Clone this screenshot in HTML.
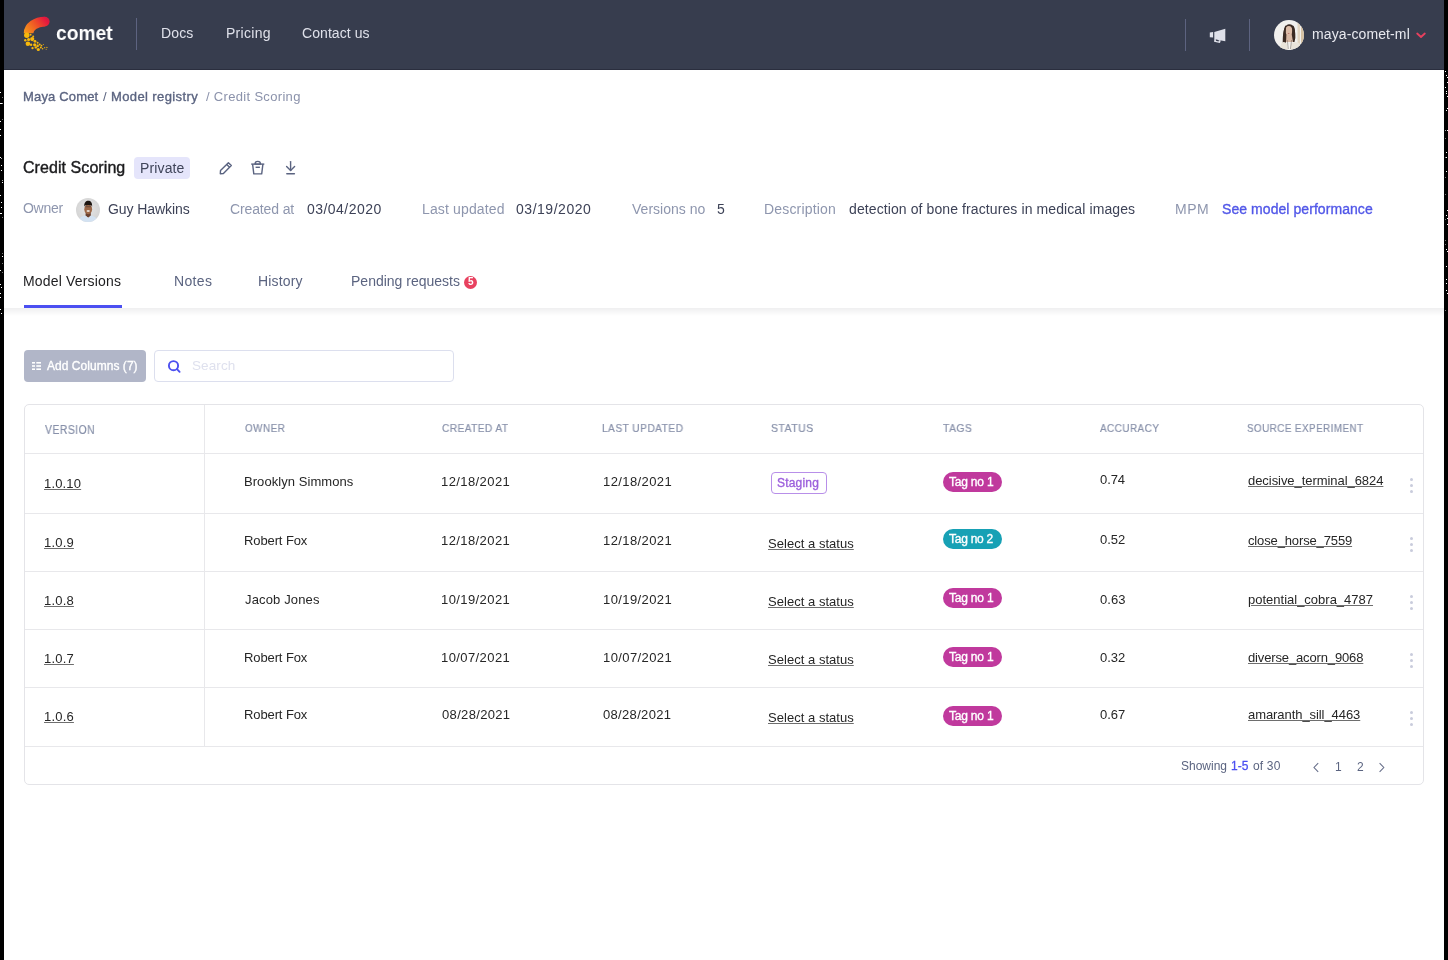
<!DOCTYPE html>
<html><head><meta charset="utf-8"><title>Credit Scoring - Model registry</title>
<style>
html,body{margin:0;padding:0;background:#fff;}
body{width:1448px;height:960px;position:relative;overflow:hidden;font-family:"Liberation Sans",sans-serif;}
.abs{position:absolute;box-sizing:content-box;}
.t{position:absolute;line-height:1;white-space:nowrap;will-change:transform;}
#nav{position:absolute;left:0;top:0;width:1448px;height:69px;background:#373d4e;border-bottom:1px solid #2a2e3e;}
</style></head><body>
<div id="nav"></div><svg class="abs" style="left:16px;top:10px" width="40" height="45" viewBox="0 0 40 45">
<defs><linearGradient id="lg" gradientUnits="userSpaceOnUse" x1="10" y1="26" x2="34" y2="8">
<stop offset="0" stop-color="#f6a01a"/><stop offset="0.5" stop-color="#ee5326"/><stop offset="0.85" stop-color="#e5173f"/><stop offset="1" stop-color="#c4223f"/></linearGradient></defs>
<path d="M12.6 23.2 A16.2 11.6 0 0 1 28.8 11.6" stroke="url(#lg)" stroke-width="9.6" fill="none" stroke-linecap="butt"/><circle cx="28.8" cy="11.6" r="4.8" fill="url(#lg)"/>
<g fill="#f7b80c">
<circle cx="10.8" cy="25.3" r="2.7"/><circle cx="14.6" cy="24.8" r="1"/><circle cx="17.2" cy="26.4" r="1"/>
<circle cx="9.3" cy="30.2" r="1.2"/><circle cx="12.6" cy="29.5" r="1.6"/><circle cx="16.2" cy="29.1" r="2.1"/>
<circle cx="19" cy="31.3" r="1.4"/><circle cx="21.6" cy="32.7" r="1"/>
<circle cx="11.9" cy="33.8" r="2.3"/><circle cx="15.1" cy="34.8" r="1.2"/><circle cx="18.7" cy="34.8" r="1.6"/><circle cx="21.6" cy="35.9" r="1.3"/><circle cx="23.7" cy="34.5" r="1"/><circle cx="25.5" cy="35.6" r="0.9"/><circle cx="27.3" cy="34.5" r="0.5"/>
<circle cx="16.5" cy="38.1" r="1.2"/><circle cx="19.8" cy="37.4" r="1.2"/><circle cx="22.3" cy="39.5" r="1.6"/><circle cx="24.8" cy="37.4" r="1"/><circle cx="26.6" cy="38.8" r="0.8"/><circle cx="28.7" cy="37.7" r="0.6"/><circle cx="30.9" cy="37.4" r="0.6"/><circle cx="30.2" cy="39.2" r="0.5"/>
</g></svg><div class="t " style="left:55.99px;top:21.72px;font-size:21px;color:#ffffff;font-weight:700;letter-spacing:-1.305px;letter-spacing:0;transform:scaleX(0.915);transform-origin:0 0;">comet</div>
<div class="abs" style="left:136px;top:18px;width:1px;height:32px;background:#5d6380"></div><div class="t " style="left:160.72px;top:26.45px;font-size:14px;color:#dfe1ea;font-weight:400;letter-spacing:0.124px;">Docs</div>
<div class="t " style="left:225.72px;top:26.45px;font-size:14px;color:#dfe1ea;font-weight:400;letter-spacing:0.283px;">Pricing</div>
<div class="t " style="left:302.45px;top:26.45px;font-size:14px;color:#dfe1ea;font-weight:400;letter-spacing:0.075px;">Contact us</div>
<div class="abs" style="left:1185px;top:19px;width:1px;height:32px;background:#5d6380"></div><div class="abs" style="left:1249px;top:19px;width:1px;height:32px;background:#5d6380"></div><svg class="abs" style="left:1209px;top:28px" width="18" height="16" viewBox="0 0 18 16">
<path d="M0.8 4.5 L4.1 4.1 L4.1 9.6 L0.8 9.2 Z" fill="#dfe1ea"/>
<path d="M5.3 4.1 L16.3 0.8 L16.3 13.2 L5.3 11.2 Z" fill="#dfe1ea"/>
<path d="M5.4 10.9 L11.9 12.4 L10.9 14.9 L5 13.7 Z" fill="#dfe1ea"/>
<path d="M7.1 11.6 L10 12.3 L9.5 13.4 L6.8 12.8 Z" fill="#373d4e"/>
</svg><svg class="abs" style="left:1274px;top:20px" width="30" height="30" viewBox="0 0 30 30">
<defs><clipPath id="ca"><circle cx="15" cy="15" r="15"/></clipPath></defs>
<g clip-path="url(#ca)">
<rect width="30" height="30" fill="#f1f0ed"/><rect x="23.5" y="0" width="2.5" height="30" fill="#e2d5c1"/><rect x="27" y="0" width="3" height="30" fill="#d6c2a4"/>
<path d="M9 29 C8.5 18 8.5 5 15 4.2 C20.5 4 21.5 10 21.3 18 L20.5 22 L12 22 Z" fill="#3b2b23"/>
<path d="M12.5 13 L17.5 13 L19 22 L12 22 Z" fill="#d8b8a3"/>
<ellipse cx="14.8" cy="10.6" rx="3.4" ry="4.6" fill="#dcbca7"/>
<path d="M9.3 24 C9.3 12 10 6 12.2 5.2 L11.6 14 L12 24 Z" fill="#3b2b23"/>
<path d="M19 5.5 C21 7 21.3 12 21 20 L18.6 16 L18.4 8 Z" fill="#3b2b23"/>
<ellipse cx="14.7" cy="13.5" rx="1" ry="0.45" fill="#b86a62"/>
<path d="M5 30 L7.5 23 C9.5 21.3 11.5 21.8 13.2 24.5 L14.5 30 Z" fill="#e9e4da"/>
<path d="M15.5 30 L17 24 C19 21.5 23 21.8 25.5 23.5 L28 30 Z" fill="#e9e4da"/>
<path d="M13.2 24.5 L17 24 L16.6 30 L13.8 30 Z" fill="#f7f5f1"/>
<path d="M13.3 20 L14.3 29 M17.6 20 L16.4 29" stroke="#6b625c" stroke-width="0.5" fill="none"/>
</g></svg><div class="t " style="left:1312.30px;top:27.45px;font-size:14px;color:#e8e9ef;font-weight:400;letter-spacing:0.107px;">maya-comet-ml</div>
<svg class="abs" style="left:1416px;top:32px" width="10" height="7" viewBox="0 0 10 7"><path d="M1.2 1.5 L5 5 L8.8 1.5" stroke="#e8405e" stroke-width="1.8" fill="none" stroke-linecap="round" stroke-linejoin="round"/></svg><div class="t " style="left:23.18px;top:89.99px;font-size:13px;color:#5b6480;font-weight:400;letter-spacing:0.165px;-webkit-text-stroke:0.35px currentColor;">Maya Comet</div>
<div class="t " style="left:103.00px;top:89.99px;font-size:13px;color:#5b6480;font-weight:400;">/</div>
<div class="t " style="left:111.36px;top:89.99px;font-size:13px;color:#5b6480;font-weight:400;letter-spacing:0.390px;-webkit-text-stroke:0.35px currentColor;">Model registry</div>
<div class="t " style="left:206.14px;top:89.99px;font-size:13px;color:#8b92ab;font-weight:400;letter-spacing:0.319px;">/ Credit Scoring</div>
<div class="t " style="left:23.46px;top:160.05px;font-size:16px;color:#1c1c1e;font-weight:400;letter-spacing:0.067px;-webkit-text-stroke:0.4px currentColor;">Credit Scoring</div>
<div class="abs" style="left:134px;top:157px;width:56px;height:22px;background:#e5e5fb;border-radius:4px"></div><div class="t " style="left:139.80px;top:161.15px;font-size:14px;color:#3f4459;font-weight:400;letter-spacing:0.129px;">Private</div>
<svg class="abs" style="left:219px;top:161px" width="14" height="14" viewBox="0 0 14 14" fill="none" stroke="#5a6380" stroke-width="1.4" stroke-linejoin="round">
<path d="M1.3 12.7 L1.5 9.6 L9.4 1.7 L12.3 4.6 L4.4 12.5 Z"/><path d="M7.7 3.4 L10.6 6.3"/></svg><svg class="abs" style="left:250px;top:160px" width="16" height="16" viewBox="0 0 16 16" fill="none" stroke="#5a6380" stroke-width="1.4" stroke-linejoin="round">
<path d="M1.2 4.1 H14.3"/><path d="M2.6 4.1 L3.8 13.9 H11.7 L12.9 4.1"/><path d="M5 4.1 A2.75 2.75 0 0 1 10.5 4.1 Z"/><path d="M5.6 7.3 H9.9"/></svg><svg class="abs" style="left:284px;top:160px" width="13" height="16" viewBox="0 0 13 16" fill="none" stroke="#5a6380" stroke-width="1.4" stroke-linecap="round" stroke-linejoin="round">
<path d="M6.6 1.6 V10.4"/><path d="M2.6 6.4 L6.6 10.4 L10.6 6.4"/><path d="M2.8 13.7 H10.4"/></svg><div class="t " style="left:23.05px;top:201.15px;font-size:14px;color:#8e96ae;font-weight:400;letter-spacing:-0.278px;">Owner</div>
<svg class="abs" style="left:76px;top:198px" width="24" height="24" viewBox="0 0 24 24">
<defs><clipPath id="cb"><circle cx="12" cy="12" r="12"/></clipPath><radialGradient id="gb" cx="0.5" cy="0.45" r="0.6"><stop offset="0" stop-color="#e6e6e6"/><stop offset="1" stop-color="#d2d2d2"/></radialGradient></defs>
<g clip-path="url(#cb)"><rect width="24" height="24" fill="url(#gb)"/>
<path d="M9.8 14 L14.6 14 L15 18 L12.2 19.5 L9.4 18 Z" fill="#6a4231"/>
<path d="M2 24 C3 19.5 6.5 17.8 9.8 17.6 L12.2 20.2 L14.6 17.6 C17.5 17.8 21 19.5 22 24 Z" fill="#d3e2f2"/>
<ellipse cx="12.2" cy="11.2" rx="3.9" ry="5" fill="#9c6848"/>
<path d="M8.2 8.8 C8 4.5 10 2.8 12.2 2.8 C14.8 2.8 16.4 4.5 16.1 8.8 L15.6 7.6 C14 6.8 10.4 6.8 8.8 7.6 Z" fill="#1d1510"/>
<rect x="9.4" y="8.3" width="5.7" height="0.9" fill="#4b3b3b" opacity="0.7"/>
<ellipse cx="12.2" cy="13" rx="1.7" ry="1" fill="#e6dcd4"/>
</g></svg><div class="t " style="left:107.65px;top:202.15px;font-size:14px;color:#3d4257;font-weight:400;letter-spacing:-0.078px;">Guy Hawkins</div>
<div class="t " style="left:230.45px;top:201.65px;font-size:14px;color:#8e96ae;font-weight:400;letter-spacing:-0.129px;">Created at</div>
<div class="t " style="left:306.99px;top:201.65px;font-size:14px;color:#3d4257;font-weight:400;letter-spacing:0.464px;">03/04/2020</div>
<div class="t " style="left:421.66px;top:201.65px;font-size:14px;color:#8e96ae;font-weight:400;letter-spacing:0.136px;">Last updated</div>
<div class="t " style="left:515.65px;top:201.65px;font-size:14px;color:#3d4257;font-weight:400;letter-spacing:0.527px;">03/19/2020</div>
<div class="t " style="left:631.55px;top:201.65px;font-size:14px;color:#8e96ae;font-weight:400;letter-spacing:0.022px;">Versions no</div>
<div class="t " style="left:716.71px;top:201.65px;font-size:14px;color:#3d4257;font-weight:400;">5</div>
<div class="t " style="left:764.04px;top:201.65px;font-size:14px;color:#8e96ae;font-weight:400;letter-spacing:0.180px;">Description</div>
<div class="t " style="left:849.34px;top:201.65px;font-size:14px;color:#3d4257;font-weight:400;letter-spacing:0.099px;">detection of bone fractures in medical images</div>
<div class="t " style="left:1175.16px;top:201.65px;font-size:14px;color:#8e96ae;font-weight:400;letter-spacing:0.559px;">MPM</div>
<div class="t " style="left:1221.79px;top:201.65px;font-size:14px;color:#5157e8;font-weight:400;letter-spacing:0.064px;-webkit-text-stroke:0.35px currentColor;">See model performance</div>
<div class="t " style="left:23.15px;top:273.95px;font-size:14px;color:#1d1d1f;font-weight:400;letter-spacing:0.171px;">Model Versions</div>
<div class="t " style="left:173.80px;top:273.95px;font-size:14px;color:#5b6480;font-weight:400;letter-spacing:0.345px;">Notes</div>
<div class="t " style="left:258.38px;top:273.95px;font-size:14px;color:#5b6480;font-weight:400;letter-spacing:0.157px;">History</div>
<div class="t " style="left:351.44px;top:273.95px;font-size:14px;color:#5b6480;font-weight:400;letter-spacing:0.003px;">Pending requests</div>
<div class="abs" style="left:464px;top:276px;width:13px;height:13px;border-radius:50%;background:#e8415f"></div><div class="t " style="left:467.60px;top:277.33px;font-size:10px;color:#ffffff;font-weight:700;">5</div>
<div class="abs" style="left:24px;top:305px;width:98px;height:3px;background:#4b4ff1"></div><div class="abs" style="left:4px;top:308px;width:1440px;height:8px;background:linear-gradient(#efeff0,#ffffff)"></div><div class="abs" style="left:24px;top:350px;width:122px;height:32px;background:#b1b6c8;border-radius:4px"></div><svg class="abs" style="left:32px;top:362px" width="9" height="8" viewBox="0 0 9 8" fill="#ffffff">
<rect x="0" y="0" width="3" height="1.6"/><rect x="4.3" y="0" width="4.7" height="1.6"/>
<rect x="0" y="3.2" width="3" height="1.6"/><rect x="4.3" y="3.2" width="4.7" height="1.6"/>
<rect x="0" y="6.4" width="3" height="1.6"/><rect x="4.3" y="6.4" width="4.7" height="1.6"/></svg><div class="t " style="left:47.12px;top:359.84px;font-size:12px;color:#ffffff;font-weight:400;letter-spacing:0.040px;-webkit-text-stroke:0.35px currentColor;">Add Columns (7)</div>
<div class="abs" style="left:154px;top:350px;width:298px;height:30px;border:1px solid #dcdfee;border-radius:4px"></div><svg class="abs" style="left:166px;top:358px" width="16" height="16" viewBox="0 0 16 16" fill="none" stroke="#4c50f0" stroke-width="1.9" stroke-linecap="round">
<circle cx="7.5" cy="7.7" r="4.6"/><path d="M11 11.2 L13.6 13.8"/></svg><div class="t " style="left:192.06px;top:359.37px;font-size:13.5px;color:#dfe1ee;font-weight:400;letter-spacing:0.111px;">Search</div>
<div class="abs" style="left:24px;top:404px;width:1398px;height:379px;border:1px solid #e4e4e8;border-radius:5px"></div><div class="abs" style="left:25px;top:453px;width:1398px;height:1px;background:#e8e8eb"></div><div class="abs" style="left:204px;top:405px;width:1px;height:341px;background:#e8e8eb"></div><div class="abs" style="left:25px;top:513px;width:1398px;height:1px;background:#e8e8eb"></div><div class="abs" style="left:25px;top:571px;width:1398px;height:1px;background:#e8e8eb"></div><div class="abs" style="left:25px;top:629px;width:1398px;height:1px;background:#e8e8eb"></div><div class="abs" style="left:25px;top:687px;width:1398px;height:1px;background:#e8e8eb"></div><div class="abs" style="left:25px;top:746px;width:1398px;height:1px;background:#e8e8eb"></div><div class="t " style="left:44.59px;top:423.84px;font-size:12px;color:#8891aa;font-weight:400;transform:scaleX(0.8709);transform-origin:0 0;-webkit-text-stroke:0.2px currentColor;letter-spacing:0.5px;">VERSION</div>
<div class="t " style="left:245.08px;top:422.99px;font-size:11px;color:#8891aa;font-weight:400;transform:scaleX(0.9003);transform-origin:0 0;-webkit-text-stroke:0.2px currentColor;letter-spacing:0.5px;">OWNER</div>
<div class="t " style="left:441.85px;top:422.99px;font-size:11px;color:#8891aa;font-weight:400;transform:scaleX(0.9171);transform-origin:0 0;-webkit-text-stroke:0.2px currentColor;letter-spacing:0.5px;">CREATED AT</div>
<div class="t " style="left:602.39px;top:422.99px;font-size:11px;color:#8891aa;font-weight:400;transform:scaleX(0.9240);transform-origin:0 0;-webkit-text-stroke:0.2px currentColor;letter-spacing:0.5px;">LAST UPDATED</div>
<div class="t " style="left:771.28px;top:422.99px;font-size:11px;color:#8891aa;font-weight:400;transform:scaleX(0.9522);transform-origin:0 0;-webkit-text-stroke:0.2px currentColor;letter-spacing:0.5px;">STATUS</div>
<div class="t " style="left:942.90px;top:422.99px;font-size:11px;color:#8891aa;font-weight:400;transform:scaleX(0.9410);transform-origin:0 0;-webkit-text-stroke:0.2px currentColor;letter-spacing:0.5px;">TAGS</div>
<div class="t " style="left:1100.44px;top:422.99px;font-size:11px;color:#8891aa;font-weight:400;transform:scaleX(0.9027);transform-origin:0 0;-webkit-text-stroke:0.2px currentColor;letter-spacing:0.5px;">ACCURACY</div>
<div class="t " style="left:1247.49px;top:422.99px;font-size:11px;color:#8891aa;font-weight:400;transform:scaleX(0.8947);transform-origin:0 0;-webkit-text-stroke:0.2px currentColor;letter-spacing:0.5px;">SOURCE EXPERIMENT</div>
<div class="t " style="left:44.39px;top:476.99px;font-size:13px;color:#262626;font-weight:400;letter-spacing:0.166px;text-decoration:underline;text-underline-offset:1px;text-decoration-color:#6e6e6e">1.0.10</div>
<div class="t " style="left:244.42px;top:474.99px;font-size:13px;color:#262626;font-weight:400;letter-spacing:0.062px;">Brooklyn Simmons</div>
<div class="t " style="left:441.48px;top:474.99px;font-size:13px;color:#262626;font-weight:400;letter-spacing:0.413px;">12/18/2021</div>
<div class="t " style="left:602.80px;top:474.99px;font-size:13px;color:#262626;font-weight:400;letter-spacing:0.398px;">12/18/2021</div>
<div class="abs" style="left:771px;top:472px;width:54px;height:20px;border:1px solid #b88fe9;border-radius:4px"></div><div class="t " style="left:777.41px;top:476.84px;font-size:12px;color:#9c5fdc;font-weight:400;letter-spacing:0.187px;-webkit-text-stroke:0.35px currentColor;">Staging</div>
<div class="abs" style="left:943px;top:472px;width:59px;height:20px;border-radius:10px;background:#c0399d"></div><div class="t " style="left:949.30px;top:475.84px;font-size:12px;color:#ffffff;font-weight:400;letter-spacing:-0.204px;-webkit-text-stroke:0.35px currentColor;">Tag no 1</div>
<div class="t " style="left:1099.69px;top:473.29px;font-size:13px;color:#262626;font-weight:400;letter-spacing:-0.084px;">0.74</div>
<div class="t " style="left:1248.11px;top:474.29px;font-size:13px;color:#262626;font-weight:400;letter-spacing:-0.055px;text-decoration:underline;text-underline-offset:1px;text-decoration-color:#6e6e6e">decisive_terminal_6824</div>
<div class="abs" style="left:1410px;top:478.0px;width:3px;height:3px;border-radius:50%;background:#c9ccdc"></div><div class="abs" style="left:1410px;top:484.0px;width:3px;height:3px;border-radius:50%;background:#c9ccdc"></div><div class="abs" style="left:1410px;top:490.0px;width:3px;height:3px;border-radius:50%;background:#c9ccdc"></div><div class="t " style="left:44.39px;top:535.99px;font-size:13px;color:#262626;font-weight:400;letter-spacing:0.196px;text-decoration:underline;text-underline-offset:1px;text-decoration-color:#6e6e6e">1.0.9</div>
<div class="t " style="left:244.42px;top:534.19px;font-size:13px;color:#262626;font-weight:400;letter-spacing:-0.107px;">Robert Fox</div>
<div class="t " style="left:441.48px;top:534.19px;font-size:13px;color:#262626;font-weight:400;letter-spacing:0.413px;">12/18/2021</div>
<div class="t " style="left:602.80px;top:534.19px;font-size:13px;color:#262626;font-weight:400;letter-spacing:0.398px;">12/18/2021</div>
<div class="t " style="left:768.49px;top:536.99px;font-size:13px;color:#262626;font-weight:400;letter-spacing:0.033px;text-decoration:underline;text-underline-offset:1px;text-decoration-color:#6e6e6e">Select a status</div>
<div class="abs" style="left:943px;top:529px;width:59px;height:20px;border-radius:10px;background:#17a1b5"></div><div class="t " style="left:949.30px;top:532.84px;font-size:12px;color:#ffffff;font-weight:400;letter-spacing:-0.255px;-webkit-text-stroke:0.35px currentColor;">Tag no 2</div>
<div class="t " style="left:1099.69px;top:533.29px;font-size:13px;color:#262626;font-weight:400;letter-spacing:0.003px;">0.52</div>
<div class="t " style="left:1248.11px;top:534.09px;font-size:13px;color:#262626;font-weight:400;letter-spacing:-0.135px;text-decoration:underline;text-underline-offset:1px;text-decoration-color:#6e6e6e">close_horse_7559</div>
<div class="abs" style="left:1410px;top:537.0px;width:3px;height:3px;border-radius:50%;background:#c9ccdc"></div><div class="abs" style="left:1410px;top:543.0px;width:3px;height:3px;border-radius:50%;background:#c9ccdc"></div><div class="abs" style="left:1410px;top:549.0px;width:3px;height:3px;border-radius:50%;background:#c9ccdc"></div><div class="t " style="left:44.39px;top:594.49px;font-size:13px;color:#262626;font-weight:400;letter-spacing:0.196px;text-decoration:underline;text-underline-offset:1px;text-decoration-color:#6e6e6e">1.0.8</div>
<div class="t " style="left:244.80px;top:592.99px;font-size:13px;color:#262626;font-weight:400;letter-spacing:0.147px;">Jacob Jones</div>
<div class="t " style="left:441.48px;top:592.99px;font-size:13px;color:#262626;font-weight:400;letter-spacing:0.413px;">10/19/2021</div>
<div class="t " style="left:602.80px;top:592.99px;font-size:13px;color:#262626;font-weight:400;letter-spacing:0.398px;">10/19/2021</div>
<div class="t " style="left:768.49px;top:594.99px;font-size:13px;color:#262626;font-weight:400;letter-spacing:0.033px;text-decoration:underline;text-underline-offset:1px;text-decoration-color:#6e6e6e">Select a status</div>
<div class="abs" style="left:943px;top:588px;width:59px;height:20px;border-radius:10px;background:#c0399d"></div><div class="t " style="left:949.30px;top:591.84px;font-size:12px;color:#ffffff;font-weight:400;letter-spacing:-0.204px;-webkit-text-stroke:0.35px currentColor;">Tag no 1</div>
<div class="t " style="left:1099.69px;top:592.79px;font-size:13px;color:#262626;font-weight:400;letter-spacing:0.028px;">0.63</div>
<div class="t " style="left:1247.68px;top:592.99px;font-size:13px;color:#262626;font-weight:400;letter-spacing:-0.002px;text-decoration:underline;text-underline-offset:1px;text-decoration-color:#6e6e6e">potential_cobra_4787</div>
<div class="abs" style="left:1410px;top:595.0px;width:3px;height:3px;border-radius:50%;background:#c9ccdc"></div><div class="abs" style="left:1410px;top:601.0px;width:3px;height:3px;border-radius:50%;background:#c9ccdc"></div><div class="abs" style="left:1410px;top:607.0px;width:3px;height:3px;border-radius:50%;background:#c9ccdc"></div><div class="t " style="left:44.39px;top:652.29px;font-size:13px;color:#262626;font-weight:400;letter-spacing:0.196px;text-decoration:underline;text-underline-offset:1px;text-decoration-color:#6e6e6e">1.0.7</div>
<div class="t " style="left:244.42px;top:651.19px;font-size:13px;color:#262626;font-weight:400;letter-spacing:-0.107px;">Robert Fox</div>
<div class="t " style="left:441.48px;top:651.19px;font-size:13px;color:#262626;font-weight:400;letter-spacing:0.413px;">10/07/2021</div>
<div class="t " style="left:602.80px;top:651.19px;font-size:13px;color:#262626;font-weight:400;letter-spacing:0.398px;">10/07/2021</div>
<div class="t " style="left:768.49px;top:652.99px;font-size:13px;color:#262626;font-weight:400;letter-spacing:0.033px;text-decoration:underline;text-underline-offset:1px;text-decoration-color:#6e6e6e">Select a status</div>
<div class="abs" style="left:943px;top:647px;width:59px;height:20px;border-radius:10px;background:#c0399d"></div><div class="t " style="left:949.30px;top:650.84px;font-size:12px;color:#ffffff;font-weight:400;letter-spacing:-0.204px;-webkit-text-stroke:0.35px currentColor;">Tag no 1</div>
<div class="t " style="left:1099.69px;top:650.69px;font-size:13px;color:#262626;font-weight:400;letter-spacing:0.003px;">0.32</div>
<div class="t " style="left:1248.11px;top:650.99px;font-size:13px;color:#262626;font-weight:400;letter-spacing:-0.139px;text-decoration:underline;text-underline-offset:1px;text-decoration-color:#6e6e6e">diverse_acorn_9068</div>
<div class="abs" style="left:1410px;top:653.0px;width:3px;height:3px;border-radius:50%;background:#c9ccdc"></div><div class="abs" style="left:1410px;top:659.0px;width:3px;height:3px;border-radius:50%;background:#c9ccdc"></div><div class="abs" style="left:1410px;top:665.0px;width:3px;height:3px;border-radius:50%;background:#c9ccdc"></div><div class="t " style="left:44.39px;top:710.49px;font-size:13px;color:#262626;font-weight:400;letter-spacing:0.196px;text-decoration:underline;text-underline-offset:1px;text-decoration-color:#6e6e6e">1.0.6</div>
<div class="t " style="left:244.42px;top:707.99px;font-size:13px;color:#262626;font-weight:400;letter-spacing:-0.107px;">Robert Fox</div>
<div class="t " style="left:442.13px;top:707.99px;font-size:13px;color:#262626;font-weight:400;letter-spacing:0.336px;">08/28/2021</div>
<div class="t " style="left:603.45px;top:707.99px;font-size:13px;color:#262626;font-weight:400;letter-spacing:0.325px;">08/28/2021</div>
<div class="t " style="left:768.49px;top:710.99px;font-size:13px;color:#262626;font-weight:400;letter-spacing:0.033px;text-decoration:underline;text-underline-offset:1px;text-decoration-color:#6e6e6e">Select a status</div>
<div class="abs" style="left:943px;top:706px;width:59px;height:20px;border-radius:10px;background:#c0399d"></div><div class="t " style="left:949.30px;top:709.84px;font-size:12px;color:#ffffff;font-weight:400;letter-spacing:-0.204px;-webkit-text-stroke:0.35px currentColor;">Tag no 1</div>
<div class="t " style="left:1099.69px;top:707.79px;font-size:13px;color:#262626;font-weight:400;letter-spacing:0.003px;">0.67</div>
<div class="t " style="left:1248.11px;top:707.99px;font-size:13px;color:#262626;font-weight:400;letter-spacing:-0.067px;text-decoration:underline;text-underline-offset:1px;text-decoration-color:#6e6e6e">amaranth_sill_4463</div>
<div class="abs" style="left:1410px;top:711.0px;width:3px;height:3px;border-radius:50%;background:#c9ccdc"></div><div class="abs" style="left:1410px;top:717.0px;width:3px;height:3px;border-radius:50%;background:#c9ccdc"></div><div class="abs" style="left:1410px;top:723.0px;width:3px;height:3px;border-radius:50%;background:#c9ccdc"></div><div class="t " style="left:1180.90px;top:759.84px;font-size:12px;color:#5b6480;font-weight:400;">Showing</div>
<div class="t " style="left:1230.50px;top:759.84px;font-size:12px;color:#4b4ff1;font-weight:400;-webkit-text-stroke:0.3px currentColor;">1-5</div>
<div class="t " style="left:1253.00px;top:759.84px;font-size:12px;color:#5b6480;font-weight:400;letter-spacing:0.160px;">of 30</div>
<svg class="abs" style="left:1312px;top:762px" width="8" height="11" viewBox="0 0 8 11" fill="none" stroke="#646c88" stroke-width="1.05"><path d="M6.2 1.2 L2 5.5 L6.2 9.8"/></svg><div class="t " style="left:1334.50px;top:761.44px;font-size:12px;color:#5b6480;font-weight:400;">1</div>
<div class="t " style="left:1357.00px;top:761.44px;font-size:12px;color:#5b6480;font-weight:400;">2</div>
<svg class="abs" style="left:1378px;top:762px" width="8" height="11" viewBox="0 0 8 11" fill="none" stroke="#646c88" stroke-width="1.05"><path d="M1.6 1.2 L5.8 5.5 L1.6 9.8"/></svg><div class="abs" style="left:0;top:0;width:4px;height:960px;background:#000"></div><div class="abs" style="left:1444px;top:0;width:4px;height:960px;background:#000"></div><div class="abs" style="left:0px;top:92px;width:1px;height:1px;background:#fff"></div><div class="abs" style="left:2px;top:97px;width:1px;height:1px;background:#777"></div><div class="abs" style="left:0px;top:103px;width:1px;height:1px;background:#fff"></div><div class="abs" style="left:1px;top:103px;width:1px;height:1px;background:#fff"></div><div class="abs" style="left:2px;top:103px;width:1px;height:1px;background:#aaa"></div><div class="abs" style="left:2px;top:119px;width:1px;height:1px;background:#777"></div><div class="abs" style="left:0px;top:121px;width:1px;height:1px;background:#fff"></div><div class="abs" style="left:0px;top:129px;width:1px;height:1px;background:#fff"></div><div class="abs" style="left:0px;top:135px;width:1px;height:1px;background:#fff"></div><div class="abs" style="left:0px;top:157px;width:1px;height:1px;background:#fff"></div><div class="abs" style="left:1px;top:158px;width:1px;height:1px;background:#aaa"></div><div class="abs" style="left:1px;top:165px;width:1px;height:1px;background:#fff"></div><div class="abs" style="left:1px;top:170px;width:1px;height:1px;background:#fff"></div><div class="abs" style="left:2px;top:180px;width:1px;height:1px;background:#aaa"></div><div class="abs" style="left:2px;top:182px;width:1px;height:1px;background:#fff"></div><div class="abs" style="left:0px;top:195px;width:1px;height:1px;background:#fff"></div><div class="abs" style="left:1px;top:202px;width:1px;height:1px;background:#fff"></div><div class="abs" style="left:1px;top:207px;width:1px;height:1px;background:#fff"></div><div class="abs" style="left:0px;top:213px;width:1px;height:1px;background:#fff"></div><div class="abs" style="left:1px;top:213px;width:1px;height:1px;background:#fff"></div><div class="abs" style="left:2px;top:217px;width:1px;height:1px;background:#777"></div><div class="abs" style="left:2px;top:253px;width:1px;height:1px;background:#777"></div><div class="abs" style="left:2px;top:256px;width:1px;height:1px;background:#fff"></div><div class="abs" style="left:2px;top:263px;width:1px;height:1px;background:#777"></div><div class="abs" style="left:0px;top:270px;width:1px;height:1px;background:#fff"></div><div class="abs" style="left:2px;top:272px;width:1px;height:1px;background:#777"></div><div class="abs" style="left:0px;top:284px;width:1px;height:1px;background:#fff"></div><div class="abs" style="left:1px;top:287px;width:1px;height:1px;background:#fff"></div><div class="abs" style="left:0px;top:293px;width:1px;height:1px;background:#fff"></div><div class="abs" style="left:0px;top:297px;width:1px;height:1px;background:#fff"></div><div class="abs" style="left:0px;top:309px;width:1px;height:1px;background:#fff"></div><div class="abs" style="left:1px;top:313px;width:1px;height:1px;background:#fff"></div><div class="abs" style="left:1445px;top:71px;width:1px;height:1px;background:#fff"></div><div class="abs" style="left:1446px;top:75px;width:1px;height:1px;background:#fff"></div><div class="abs" style="left:1447px;top:77px;width:1px;height:1px;background:#fff"></div><div class="abs" style="left:1447px;top:82px;width:1px;height:1px;background:#fff"></div><div class="abs" style="left:1445px;top:87px;width:1px;height:1px;background:#fff"></div><div class="abs" style="left:1446px;top:91px;width:1px;height:1px;background:#fff"></div><div class="abs" style="left:1446px;top:93px;width:1px;height:1px;background:#fff"></div><div class="abs" style="left:1447px;top:96px;width:1px;height:1px;background:#fff"></div><div class="abs" style="left:1447px;top:108px;width:1px;height:1px;background:#fff"></div><div class="abs" style="left:1446px;top:110px;width:1px;height:1px;background:#fff"></div><div class="abs" style="left:1445px;top:130px;width:1px;height:1px;background:#aaa"></div><div class="abs" style="left:1447px;top:130px;width:1px;height:1px;background:#fff"></div><div class="abs" style="left:1445px;top:138px;width:1px;height:1px;background:#777"></div><div class="abs" style="left:1446px;top:152px;width:1px;height:1px;background:#fff"></div><div class="abs" style="left:1445px;top:157px;width:1px;height:1px;background:#777"></div><div class="abs" style="left:1446px;top:157px;width:1px;height:1px;background:#fff"></div><div class="abs" style="left:1446px;top:171px;width:1px;height:1px;background:#fff"></div><div class="abs" style="left:1445px;top:177px;width:1px;height:1px;background:#777"></div><div class="abs" style="left:1445px;top:194px;width:1px;height:1px;background:#777"></div><div class="abs" style="left:1447px;top:210px;width:1px;height:1px;background:#fff"></div><div class="abs" style="left:1446px;top:215px;width:1px;height:1px;background:#fff"></div><div class="abs" style="left:1447px;top:218px;width:1px;height:1px;background:#fff"></div><div class="abs" style="left:1445px;top:219px;width:1px;height:1px;background:#777"></div><div class="abs" style="left:1447px;top:224px;width:1px;height:1px;background:#fff"></div><div class="abs" style="left:1445px;top:240px;width:1px;height:1px;background:#777"></div><div class="abs" style="left:1445px;top:244px;width:1px;height:1px;background:#777"></div><div class="abs" style="left:1446px;top:249px;width:1px;height:1px;background:#fff"></div><div class="abs" style="left:1447px;top:251px;width:1px;height:1px;background:#fff"></div><div class="abs" style="left:1446px;top:266px;width:1px;height:1px;background:#fff"></div><div class="abs" style="left:1446px;top:279px;width:1px;height:1px;background:#fff"></div><div class="abs" style="left:1446px;top:283px;width:1px;height:1px;background:#fff"></div><div class="abs" style="left:1446px;top:290px;width:1px;height:1px;background:#fff"></div><div class="abs" style="left:1447px;top:293px;width:1px;height:1px;background:#fff"></div><div class="abs" style="left:1445px;top:310px;width:1px;height:1px;background:#777"></div>
</body></html>
